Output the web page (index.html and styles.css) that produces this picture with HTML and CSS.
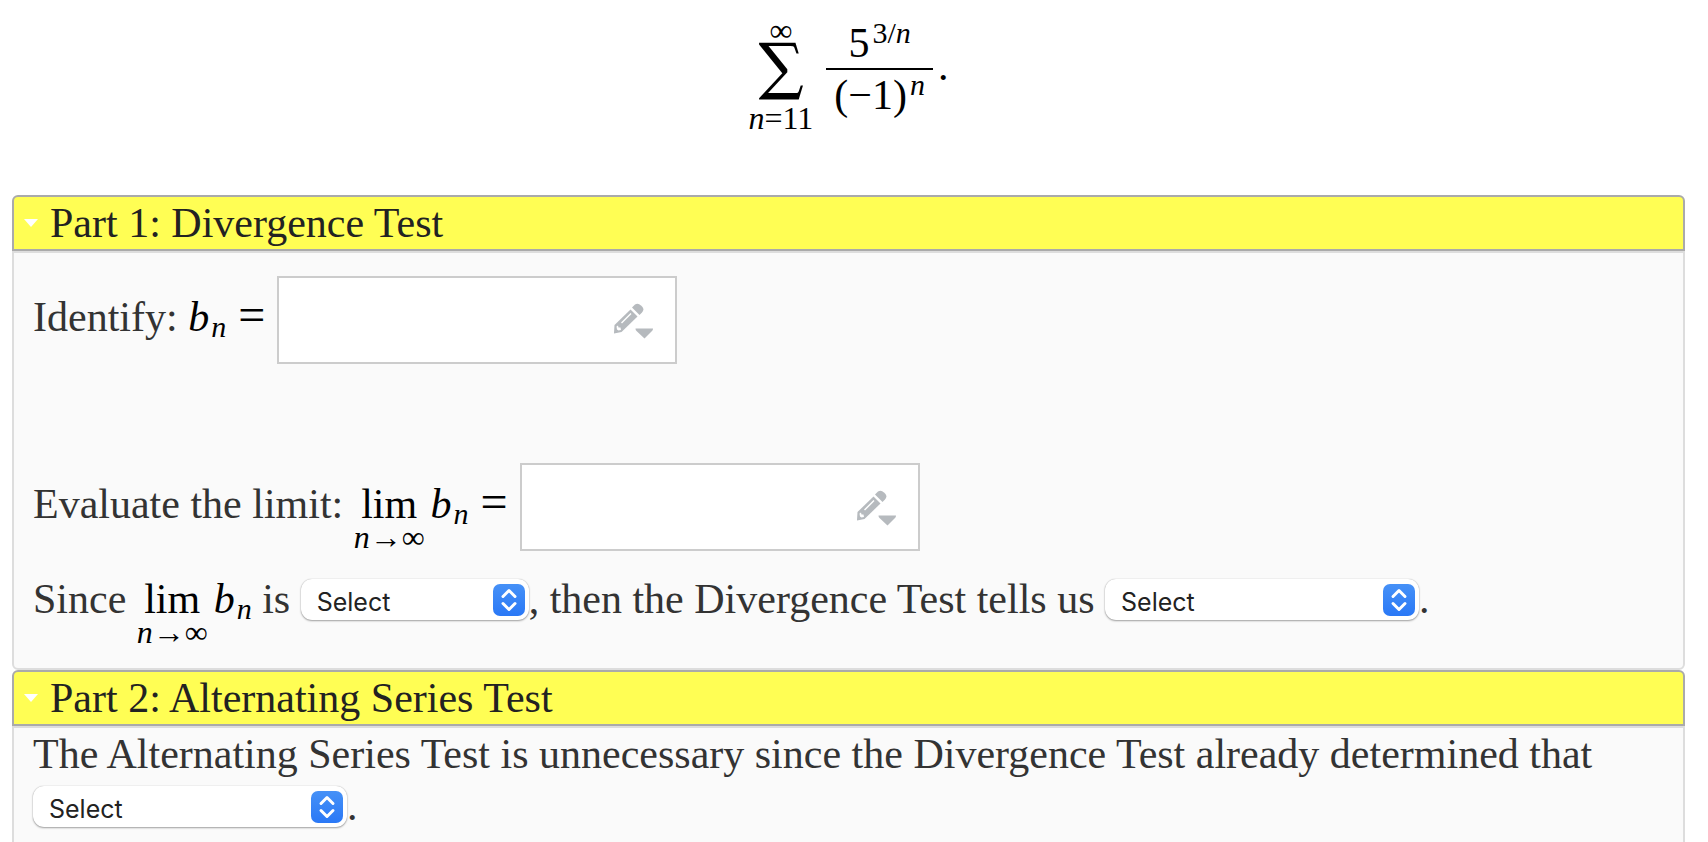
FILE: index.html
```
<!DOCTYPE html>
<html lang="en">
<head>
<meta charset="utf-8">
<title>Series Convergence</title>
<link rel="stylesheet" href="styles.css">
</head>
<body>
<main class="problem">
  <div class="formula math">
    <span class="sum">
      <span class="script">∞</span>
      <span class="sigma">∑</span>
      <span class="script"><i>n</i>=11</span>
    </span>
    <span class="fraction">
      <span class="numerator">5<span class="sup">3/<i>n</i></span></span>
      <span class="denominator">(−1)<span class="sup"><i>n</i></span></span>
    </span>
    <span class="stop">.</span>
  </div>

  <details class="part" open>
    <summary class="part-title"><span class="arrow"></span>Part 1: Divergence Test</summary>
    <div class="part-body spaced">
      <div class="row">
        <label for="bn">Identify: <span class="math"><i>b</i><span class="sub"><i>n</i></span><span class="eq">=</span></span></label>
        <span class="field">
          <input class="answer" id="bn" type="text">
          <button class="pencil" type="button" aria-label="Open equation editor">
            <svg width="40" height="36" viewBox="0 0 40 36"><g fill="#b6babe"><path d="M1 30.500 1.500 22 17.500 6.500 24.500 13.500 8.500 29Z"/><path d="M19 4.500 22 1.500Q25-.5 28 2.500L29.500 4Q31.500 7 29 9.500L26.500 12Z"/><path d="M22.500 25.500H40Q40 27 39 28L31.500 35.500 23.500 28Q22.500 27 22.500 25.500Z"/></g><path d="M8.500 20 18 10.500" stroke="#fff" stroke-width="1.500"/><path d="M3.500 23.500 4 26.500 5.500 27.500 8 27 7.500 24.500 5.500 24.500 5 22.500Z" fill="#fff"/></svg>
          </button>
        </span>
      </div>
      <div class="row limit-row">
        <label for="limit">Evaluate the limit: <span class="math"><span class="lim"><span>lim</span><span class="script"><i>n</i>→∞</span></span><i>b</i><span class="sub"><i>n</i></span><span class="eq">=</span></span></label>
        <span class="field">
          <input class="answer" id="limit" type="text">
          <button class="pencil" type="button" aria-label="Open equation editor">
            <svg width="40" height="36" viewBox="0 0 40 36"><g fill="#b6babe"><path d="M1 30.500 1.500 22 17.500 6.500 24.500 13.500 8.500 29Z"/><path d="M19 4.500 22 1.500Q25-.5 28 2.500L29.500 4Q31.500 7 29 9.500L26.500 12Z"/><path d="M22.500 25.500H40Q40 27 39 28L31.500 35.500 23.500 28Q22.500 27 22.500 25.500Z"/></g><path d="M8.500 20 18 10.500" stroke="#fff" stroke-width="1.500"/><path d="M3.500 23.500 4 26.500 5.500 27.500 8 27 7.500 24.500 5.500 24.500 5 22.500Z" fill="#fff"/></svg>
          </button>
        </span>
      </div>
      <p class="sentence">Since <span class="math"><span class="lim"><span>lim</span><span class="script"><i>n</i>→∞</span></span><i>b</i><span class="sub"><i>n</i></span></span> is <span class="picker narrow"><select aria-label="Value of the limit"><option>Select</option></select><svg class="chevrons" width="32" height="32" viewBox="0 0 32 32"><path d="M10 12.500 16 6.500 22 12.500M10 19.500 16 25.500 22 19.500"/></svg></span>, then the Divergence Test tells us <span class="picker"><select aria-label="Conclusion of the Divergence Test"><option>Select</option></select><svg class="chevrons" width="32" height="32" viewBox="0 0 32 32"><path d="M10 12.500 16 6.500 22 12.500M10 19.500 16 25.500 22 19.500"/></svg></span>.</p>
    </div>
  </details>

  <details class="part" open>
    <summary class="part-title"><span class="arrow"></span>Part 2: Alternating Series Test</summary>
    <div class="part-body">
      <p class="sentence">The Alternating Series Test is unnecessary since the Divergence Test already determined that <span class="picker"><select aria-label="What the Divergence Test determined"><option>Select</option></select><svg class="chevrons" width="32" height="32" viewBox="0 0 32 32"><path d="M10 12.500 16 6.500 22 12.500M10 19.500 16 25.500 22 19.500"/></svg></span>.</p>
    </div>
  </details>
</main>
</body>
</html>
```
FILE: styles.css
```
* { box-sizing: border-box; }
body {
  margin: 0;
  background: #fff;
  color: #333;
  font: 42px/56px "Liberation Serif", "Times New Roman", serif;
}
.problem { padding: 16px 23px 0 12px; }
.math { color: #000; }
.script { font-size: 32px; line-height: 28px; }
.sub, .sup { font-size: 30px; line-height: 1; }
.sub { vertical-align: -6px; margin-left: 2px; }
.sup { vertical-align: 14px; margin-left: 3px; }

.formula {
  display: flex;
  justify-content: center;
  align-items: flex-start;
  height: 179px;
}
.sum { display: flex; flex-direction: column; align-items: center; }
.sigma {
  padding-bottom: 8px;
  font-family: "DejaVu Math TeX Gyre", "Liberation Serif", serif;
  font-size: 54px;
  line-height: 52px;
}
.fraction { display: flex; flex-direction: column; margin: 2px 0 0 13px; text-align: center; }
.numerator { height: 52px; line-height: 48px; border-bottom: 2px solid #000; }
.denominator { height: 48px; line-height: 48px; padding: 0 8px; }
.stop { margin-left: 5px; line-height: 100px; }

.part-title {
  display: flex;
  align-items: center;
  height: 56px;
  padding-left: 10px;
  border: 2px solid #aaa;
  border-radius: 6px 6px 0 0;
  background: #fffe54;
  color: #222;
  line-height: 50px;
  cursor: pointer;
}
.arrow {
  width: 14px;
  margin-right: 12px;
  border: 7px solid transparent;
  border-top: 8px solid #fff;
  border-bottom: 0;
}
.part-body {
  padding: 0 19px 22px;
  border: 2px solid #ddd;
  border-radius: 0 0 6px 6px;
  background: #fafafa;
}
.spaced { padding-top: 23px; }
.row { display: flex; align-items: baseline; gap: 12px; height: 88px; margin-bottom: 99px; }
.limit-row { margin-bottom: 22px; }
.eq { margin-left: 12px; font-size: 48px; line-height: 1; }
.lim {
  display: inline-flex;
  flex-direction: column;
  align-items: center;
  margin-right: 6px;
  line-height: 38px;
}

.field { position: relative; display: inline-flex; }
.answer {
  width: 400px;
  height: 88px;
  padding: 0 80px 0 12px;
  border: 2px solid #ccc;
  border-radius: 0;
  background: #fff;
  font: 32px "Liberation Serif", serif;
}
.pencil {
  position: absolute;
  top: 27px;
  right: 24px;
  padding: 0;
  border: 0;
  background: none;
  line-height: 0;
}

.sentence { margin: 0; line-height: 52px; }
.picker { position: relative; display: inline-flex; width: 314px; vertical-align: 2px; }
.narrow { width: 228px; }
.picker select {
  width: 100%;
  height: 41px;
  padding: 6px 44px 0 16px;
  appearance: none;
  border: 0;
  border-radius: 11px;
  background: #fff;
  box-shadow: 0 1px 2px rgba(0, 0, 0, .35), 0 0 1px rgba(0, 0, 0, .3);
  color: #222;
  font: 25px Inter, sans-serif;
}
.chevrons {
  position: absolute;
  top: 5px;
  right: 4px;
  border-radius: 7px;
  background: linear-gradient(#4691f7, #2a78f6);
  fill: none;
  stroke: #fff;
  stroke-width: 3;
  stroke-linecap: round;
  stroke-linejoin: round;
  pointer-events: none;
}
```
